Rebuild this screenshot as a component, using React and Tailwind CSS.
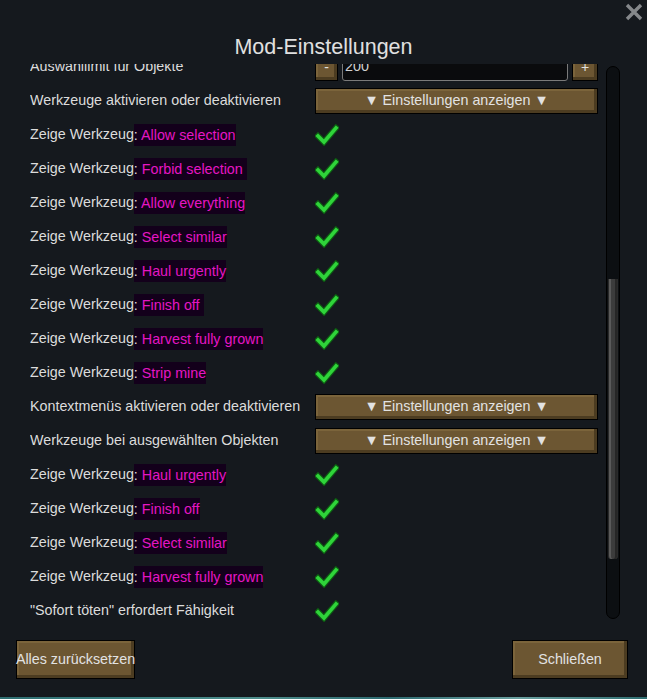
import React from 'react';

const font = { fontFamily: '"Liberation Sans", Arial, sans-serif' };

const Check = () => (
  <svg width="24" height="22" viewBox="0 0 24 22" className="block">
    <path d="M3 12 L9 18 L21 4" fill="none" stroke="#0d5c12" strokeWidth="6" strokeLinecap="square" />
    <path d="M3 12 L9 18 L21 4" fill="none" stroke="#2fd43a" strokeWidth="3.6" strokeLinecap="square" />
  </svg>
);

const BrownButton = ({ children, className = '' }) => (
  <div
    className={`flex items-center justify-center whitespace-nowrap border border-black bg-[#6c5632] text-[#e2e2e2] shadow-[inset_-3px_-3px_0_#4c3c21,inset_2px_2px_0_#7b643b] ${className}`}
  >
    {children}
  </div>
);

const Label = ({ children }) => (
  <div className="w-[285px] shrink-0 whitespace-pre text-[14.3px] text-[#dcdcdc]">{children}</div>
);

const ToolRow = ({ name }) => (
  <div className="flex h-[34px] items-center">
    <div className="flex w-[285px] shrink-0 items-center whitespace-pre text-[14.3px] text-[#dcdcdc]">
      <span>Zeige Werkzeug</span>
      <span className="inline-block bg-[#13001b] leading-[22px]">
        <span className="text-[#dcdcdc]">:</span>
        <span className="text-[#e516c4]">{' ' + name}</span>
      </span>
    </div>
    <Check />
  </div>
);

const ExpandRow = ({ label }) => (
  <div className="flex h-[34px] items-center">
    <Label>{label}</Label>
    <BrownButton className="h-[26px] w-[283px] text-[14.3px]">▼ Einstellungen anzeigen ▼</BrownButton>
  </div>
);

export default function App() {
  return (
    <div style={font} className="relative flex h-[699px] w-[647px] flex-col overflow-hidden bg-[#15191e]">
      {/* close */}
      <svg width="20" height="20" viewBox="0 0 20 20" className="absolute right-[3px] top-[2px]">
        <path d="M3 3 L17 17 M17 3 L3 17" stroke="#85888b" strokeWidth="3.4" />
      </svg>

      <div className="h-[64px] pt-[34px] text-center text-[21.5px] leading-[26px] text-[#e0e0e0]">Mod-Einstellungen</div>

      <div className="flex h-[558px] pl-[30px]">
        <div className="h-full w-[568px] overflow-hidden">
          <div className="mt-[-14px]">
            <div className="flex h-[34px] items-center">
              <Label>Auswahllimit für Objekte</Label>
              <div className="flex h-[28px] w-[283px] items-stretch gap-[4px]">
                <BrownButton className="w-[23px] text-[14px]">-</BrownButton>
                <div className="flex flex-1 items-center rounded-[3px] border border-[#7a7a7a] bg-[#0a0b0d] pl-[2px] text-[14.3px] text-[#d0d0d0]">
                  200
                </div>
                <BrownButton className="w-[26px] text-[14px]">+</BrownButton>
              </div>
            </div>
            <ExpandRow label="Werkzeuge aktivieren oder deaktivieren" />
            <ToolRow name="Allow selection" />
            <ToolRow name="Forbid selection " />
            <ToolRow name="Allow everything" />
            <ToolRow name="Select similar" />
            <ToolRow name="Haul urgently" />
            <ToolRow name="Finish off " />
            <ToolRow name="Harvest fully grown" />
            <ToolRow name="Strip mine" />
            <ExpandRow label="Kontextmenüs aktivieren oder deaktivieren" />
            <ExpandRow label="Werkzeuge bei ausgewählten Objekten" />
            <ToolRow name="Haul urgently" />
            <ToolRow name="Finish off" />
            <ToolRow name="Select similar" />
            <ToolRow name="Harvest fully grown" />
            <div className="flex h-[34px] items-center">
              <Label>"Sofort töten" erfordert Fähigkeit</Label>
              <Check />
            </div>
          </div>
        </div>

        {/* scrollbar */}
        <div className="ml-[8px] mt-[2px] flex h-[553px] w-[14px] flex-col rounded-full border border-black bg-[#0c0f12] px-[1px]">
          <div className="h-[212px] shrink-0" />
          <div className="h-[280px] w-full rounded-b-[3px] border-x border-[#2a2a2a] bg-[#3c3c3c] shadow-[inset_2px_0_0_#5a5a5a,inset_-2px_0_0_#262626]" />
        </div>
      </div>

      <div className="mt-[18px] flex justify-between pl-[16px] pr-[19px]">
        <BrownButton className="h-[39px] w-[119px] text-[14.3px]">Alles zurücksetzen</BrownButton>
        <BrownButton className="h-[39px] w-[116px] text-[14.3px]">Schließen</BrownButton>
      </div>

      <div className="absolute bottom-0 left-0 h-[2px] w-full bg-[linear-gradient(90deg,#2f6f72,#3a7f80,#4e8e8c,#2c6a70,#6aa0a0,#2f6f72)]" />
    </div>
  );
}
